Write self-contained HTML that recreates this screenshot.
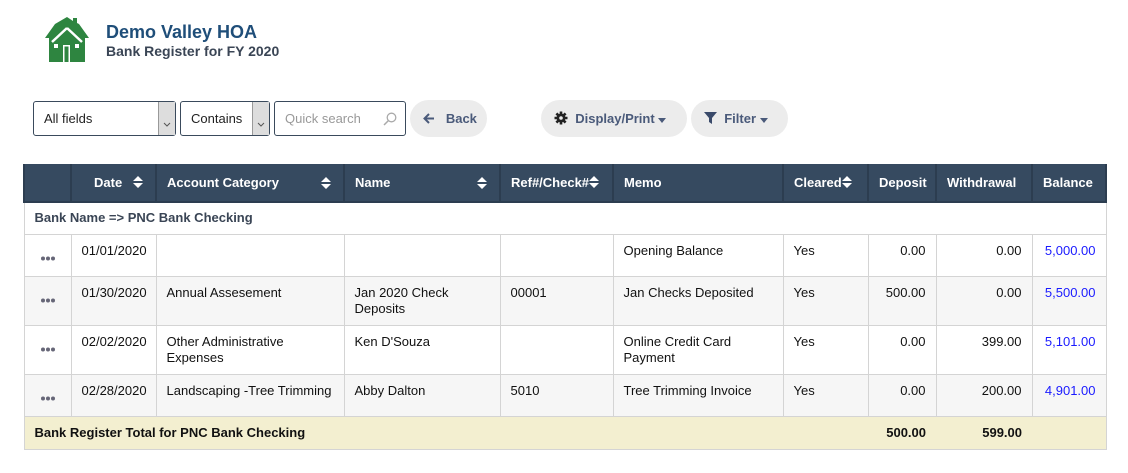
<!DOCTYPE html>
<html><head><meta charset="utf-8"><style>
*{box-sizing:border-box;margin:0;padding:0}
body{width:1128px;height:473px;background:#fff;font-family:"Liberation Sans",Arial,sans-serif;font-size:13px;color:#111;position:relative;overflow:hidden}
.t1{position:absolute;left:106px;top:22px;font-size:18px;font-weight:bold;color:#1f4e79}
.t2{position:absolute;left:106px;top:43px;font-size:14px;font-weight:bold;color:#3a4555}
.sel{position:absolute;top:101px;height:35px;border:1px solid #3a4a5c;border-radius:3px;background:#fff;font-size:13px;padding:9px 10px;color:#222}
.sel .ar{position:absolute;right:0;top:0;bottom:0;width:17px;background:#ddd;border-left:1px solid #999;text-align:center;padding-top:13px}
.btn{position:absolute;top:100px;height:37px;border-radius:19px;background:#ececec;font-weight:bold;color:#4a5a7a;font-size:13px;line-height:37px;white-space:nowrap}
table{position:absolute;left:23px;top:164px;width:1082px;border-collapse:collapse;table-layout:fixed}
th{background:#364a60;color:#fff;height:38px;font-size:13px;text-align:left;padding:0 10px;border:2px solid #2c3d50;border-top:0;white-space:nowrap;position:relative}
td{border:1px solid #d4d4d4;padding:8px 10px;vertical-align:top;line-height:16px;font-size:13px}
tr.g td{background:#f6f6f6}
.r{text-align:right}
.b{color:#1a1aff;text-align:right}
.dots{text-align:center;padding-top:14px}
.si{vertical-align:-1px}
.ab{position:absolute;right:12px;top:13px}
</style></head><body>
<svg style="position:absolute;left:42px;top:16px" width="50" height="46" viewBox="0 0 50 46">
<path d="M25 1 L13 8 L3 22 L7 22 L7 46 L43 46 L43 22 L47 22 L37 8 L35 7 L35 2 L31 2 L31 5 Z" fill="#2e8540"/>
<path d="M25 12 L10 26 M25 12 L40 26" stroke="#fff" stroke-width="2.5" fill="none"/>
<rect x="21" y="29" width="7" height="17" fill="#fff"/><rect x="22.5" y="30.5" width="4" height="15.5" fill="#2e8540"/>
<rect x="12" y="28" width="4" height="4" fill="#fff"/><rect x="33" y="28" width="4" height="4" fill="#fff"/>
</svg>
<div class="t1">Demo Valley HOA</div>
<div class="t2">Bank Register for FY 2020</div>
<div class="sel" style="left:33px;width:143px">All fields<div class="ar"><svg width="8" height="5"><path d="M1 1L4 4L7 1" stroke="#555" fill="none"/></svg></div></div>
<div class="sel" style="left:180px;width:90px">Contains<div class="ar"><svg width="8" height="5"><path d="M1 1L4 4L7 1" stroke="#555" fill="none"/></svg></div></div>
<div class="sel" style="left:274px;width:132px;color:#999">Quick search<svg style="position:absolute;right:8px;top:10px" width="14" height="14" viewBox="0 0 14 14"><circle cx="8.5" cy="5.5" r="4.3" stroke="#aaa" stroke-width="1.3" fill="none"/><path d="M5.5 8.5L1 13" stroke="#aaa" stroke-width="1.5"/></svg></div>
<div class="btn" style="left:410px;width:77px;padding-left:13px"><svg width="12" height="11" viewBox="0 0 12 11" style="vertical-align:-1px"><path d="M11 5.5H2M6 1L1.5 5.5L6 10" stroke="#4a5a7a" stroke-width="2" fill="none"/></svg>&nbsp;&nbsp; Back</div>
<div class="btn" style="left:541px;width:146px;padding-left:13px"><svg width="14" height="14" viewBox="0 0 14 14" style="vertical-align:-2px"><circle cx="7" cy="7" r="4.5" fill="#222"/><path d="M7 0.5V13.5M0.5 7H13.5M2.4 2.4L11.6 11.6M11.6 2.4L2.4 11.6" stroke="#222" stroke-width="2.6"/><circle cx="7" cy="7" r="1.8" fill="#ececec"/></svg>&nbsp; Display/Print <svg width="8" height="5"><path d="M0 0H8L4 5Z" fill="#4a5a7a"/></svg></div>
<div class="btn" style="left:691px;width:97px;padding-left:13px"><svg width="13" height="12" viewBox="0 0 13 12" style="vertical-align:-1px"><path d="M0 0H13L8 6V12L5 10V6Z" fill="#3a4a6a"/></svg>&nbsp; Filter <svg width="8" height="5"><path d="M0 0H8L4 5Z" fill="#4a5a7a"/></svg></div>
<table>
<colgroup><col style="width:47px"><col style="width:85px"><col style="width:188px"><col style="width:156px"><col style="width:113px"><col style="width:170px"><col style="width:85px"><col style="width:68px"><col style="width:96px"><col style="width:74px"></colgroup>
<tr><th></th><th style="padding-left:22px">Date&nbsp;&nbsp; <svg class="si" width="10" height="12" viewBox="0 0 10 12"><path d="M0 5L5 0L10 5ZM0 7L5 12L10 7Z" fill="#fff"/></svg></th><th>Account Category <svg class="ab" width="10" height="12" viewBox="0 0 10 12"><path d="M0 5L5 0L10 5ZM0 7L5 12L10 7Z" fill="#fff"/></svg></th><th>Name <svg class="ab" width="10" height="12" viewBox="0 0 10 12"><path d="M0 5L5 0L10 5ZM0 7L5 12L10 7Z" fill="#fff"/></svg></th><th>Ref#/Check#<svg class="si" width="10" height="12" viewBox="0 0 10 12"><path d="M0 5L5 0L10 5ZM0 7L5 12L10 7Z" fill="#fff"/></svg></th><th>Memo</th><th>Cleared<svg class="si" width="10" height="12" viewBox="0 0 10 12"><path d="M0 5L5 0L10 5ZM0 7L5 12L10 7Z" fill="#fff"/></svg></th><th>Deposit</th><th>Withdrawal</th><th>Balance</th></tr>
<tr><td colspan="10" style="font-weight:bold;color:#3a4555;height:32px;padding-top:7px">Bank Name =&gt; PNC Bank Checking</td></tr>
<tr style="height:42px"><td class="dots"><svg width="16" height="5"><circle cx="3" cy="2.5" r="2" fill="#667"/><circle cx="8" cy="2.5" r="2" fill="#667"/><circle cx="13" cy="2.5" r="2" fill="#667"/></svg></td><td>01/01/2020</td><td></td><td></td><td></td><td>Opening Balance</td><td>Yes</td><td class="r">0.00</td><td class="r">0.00</td><td class="b">5,000.00</td></tr>
<tr class="g" style="height:49px"><td class="dots"><svg width="16" height="5"><circle cx="3" cy="2.5" r="2" fill="#667"/><circle cx="8" cy="2.5" r="2" fill="#667"/><circle cx="13" cy="2.5" r="2" fill="#667"/></svg></td><td>01/30/2020</td><td>Annual Assesement</td><td>Jan 2020 Check Deposits</td><td>00001</td><td>Jan Checks Deposited</td><td>Yes</td><td class="r">500.00</td><td class="r">0.00</td><td class="b">5,500.00</td></tr>
<tr style="height:49px"><td class="dots"><svg width="16" height="5"><circle cx="3" cy="2.5" r="2" fill="#667"/><circle cx="8" cy="2.5" r="2" fill="#667"/><circle cx="13" cy="2.5" r="2" fill="#667"/></svg></td><td>02/02/2020</td><td>Other Administrative Expenses</td><td>Ken D'Souza</td><td></td><td>Online Credit Card Payment</td><td>Yes</td><td class="r">0.00</td><td class="r">399.00</td><td class="b">5,101.00</td></tr>
<tr class="g" style="height:42px"><td class="dots"><svg width="16" height="5"><circle cx="3" cy="2.5" r="2" fill="#667"/><circle cx="8" cy="2.5" r="2" fill="#667"/><circle cx="13" cy="2.5" r="2" fill="#667"/></svg></td><td>02/28/2020</td><td>Landscaping -Tree Trimming</td><td>Abby Dalton</td><td>5010</td><td>Tree Trimming Invoice</td><td>Yes</td><td class="r">0.00</td><td class="r">200.00</td><td class="b">4,901.00</td></tr>
<tr style="height:33px;background:#f3efd0;font-weight:bold"><td colspan="7" style="padding-left:10px;padding-top:8px;border-right:0">Bank Register Total for PNC Bank Checking</td><td class="r" style="border-left:0;border-right:0;padding-top:8px">500.00</td><td class="r" style="border-left:0;border-right:0;padding-top:8px">599.00</td><td style="border-left:0"></td></tr>
</table>
</body></html>
